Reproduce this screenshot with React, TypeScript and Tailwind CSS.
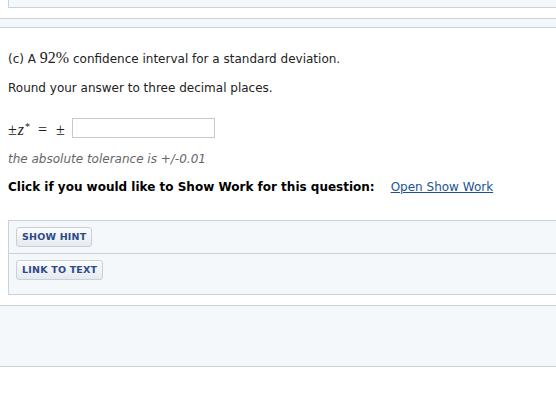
import React from "react";

export default function App() {
  const v = { fontFamily: '"DejaVu Sans", Verdana, sans-serif' };
  const serif = { fontFamily: '"Liberation Serif", "Times New Roman", serif' };
  const btn =
    "block h-[20px] px-[5px] rounded-[3px] border border-[#c9d0d8] bg-gradient-to-b from-[#fbfcfd] to-[#e6eaef] text-[9.5px] leading-[18px] font-bold text-[#2c4a8a] tracking-[0.2px]";
  return (
    <div className="w-[556px] h-[410px] overflow-hidden bg-white text-[#222]" style={v}>
      <div className="ml-[8px] h-[8px] bg-[#f4f8fb] border-l border-b border-[#c8d2e0]" />
      <div className="mt-[10px] h-[10px] bg-[#f4f8fb] border-t border-b border-[#c8d2e0]" />
      <div className="px-[8px] pt-[22px]">
        <p className="text-[12px] leading-[16px] text-[#222]">
          (c) A <span className="text-[16px]" style={serif}>92%</span> confidence interval for a standard deviation.
        </p>
        <p className="mt-[13px] text-[12px] leading-[16px]">Round your answer to three decimal places.</p>
        <div className="mt-[22px] flex items-center h-[20px]">
          <span className="w-[64px] flex items-baseline whitespace-nowrap text-[16px] pt-[3px]" style={serif}>
            <span>±</span>
            <i className="ml-[1px]">z</i>
            <sup className="text-[10px] ml-[1px]">*</sup>
            <span className="ml-[8px]">=</span>
            <span className="ml-[9px]">±</span>
          </span>
          <div className="w-[143px] h-[20px] border border-[#c9c9c9] bg-white" />
        </div>
        <p className="mt-[13px] text-[12px] italic text-[#666] leading-[16px]">the absolute tolerance is +/-0.01</p>
        <div className="mt-[12px] flex items-center text-[12px] leading-[16px]">
          <span className="font-bold text-black">Click if you would like to Show Work for this question:</span>
          <a className="ml-[16px] underline text-[#1d5290]">Open Show Work</a>
        </div>
      </div>
      <div className="ml-[8px] mt-[25px] bg-[#f5f8fb] border-l border-t border-b border-[#c8d2e0]">
        <div className="h-[33px] flex items-start pt-[6px] pl-[7px] border-b border-[#c8d2e0]">
          <button className={btn}>SHOW HINT</button>
        </div>
        <div className="h-[40px] flex items-start pt-[6px] pl-[7px]">
          <button className={btn}>LINK TO TEXT</button>
        </div>
      </div>
      <div className="mt-[10px] h-[62px] bg-[#f4f8fb] border-t border-b border-[#c8d2e0]" />
    </div>
  );
}
